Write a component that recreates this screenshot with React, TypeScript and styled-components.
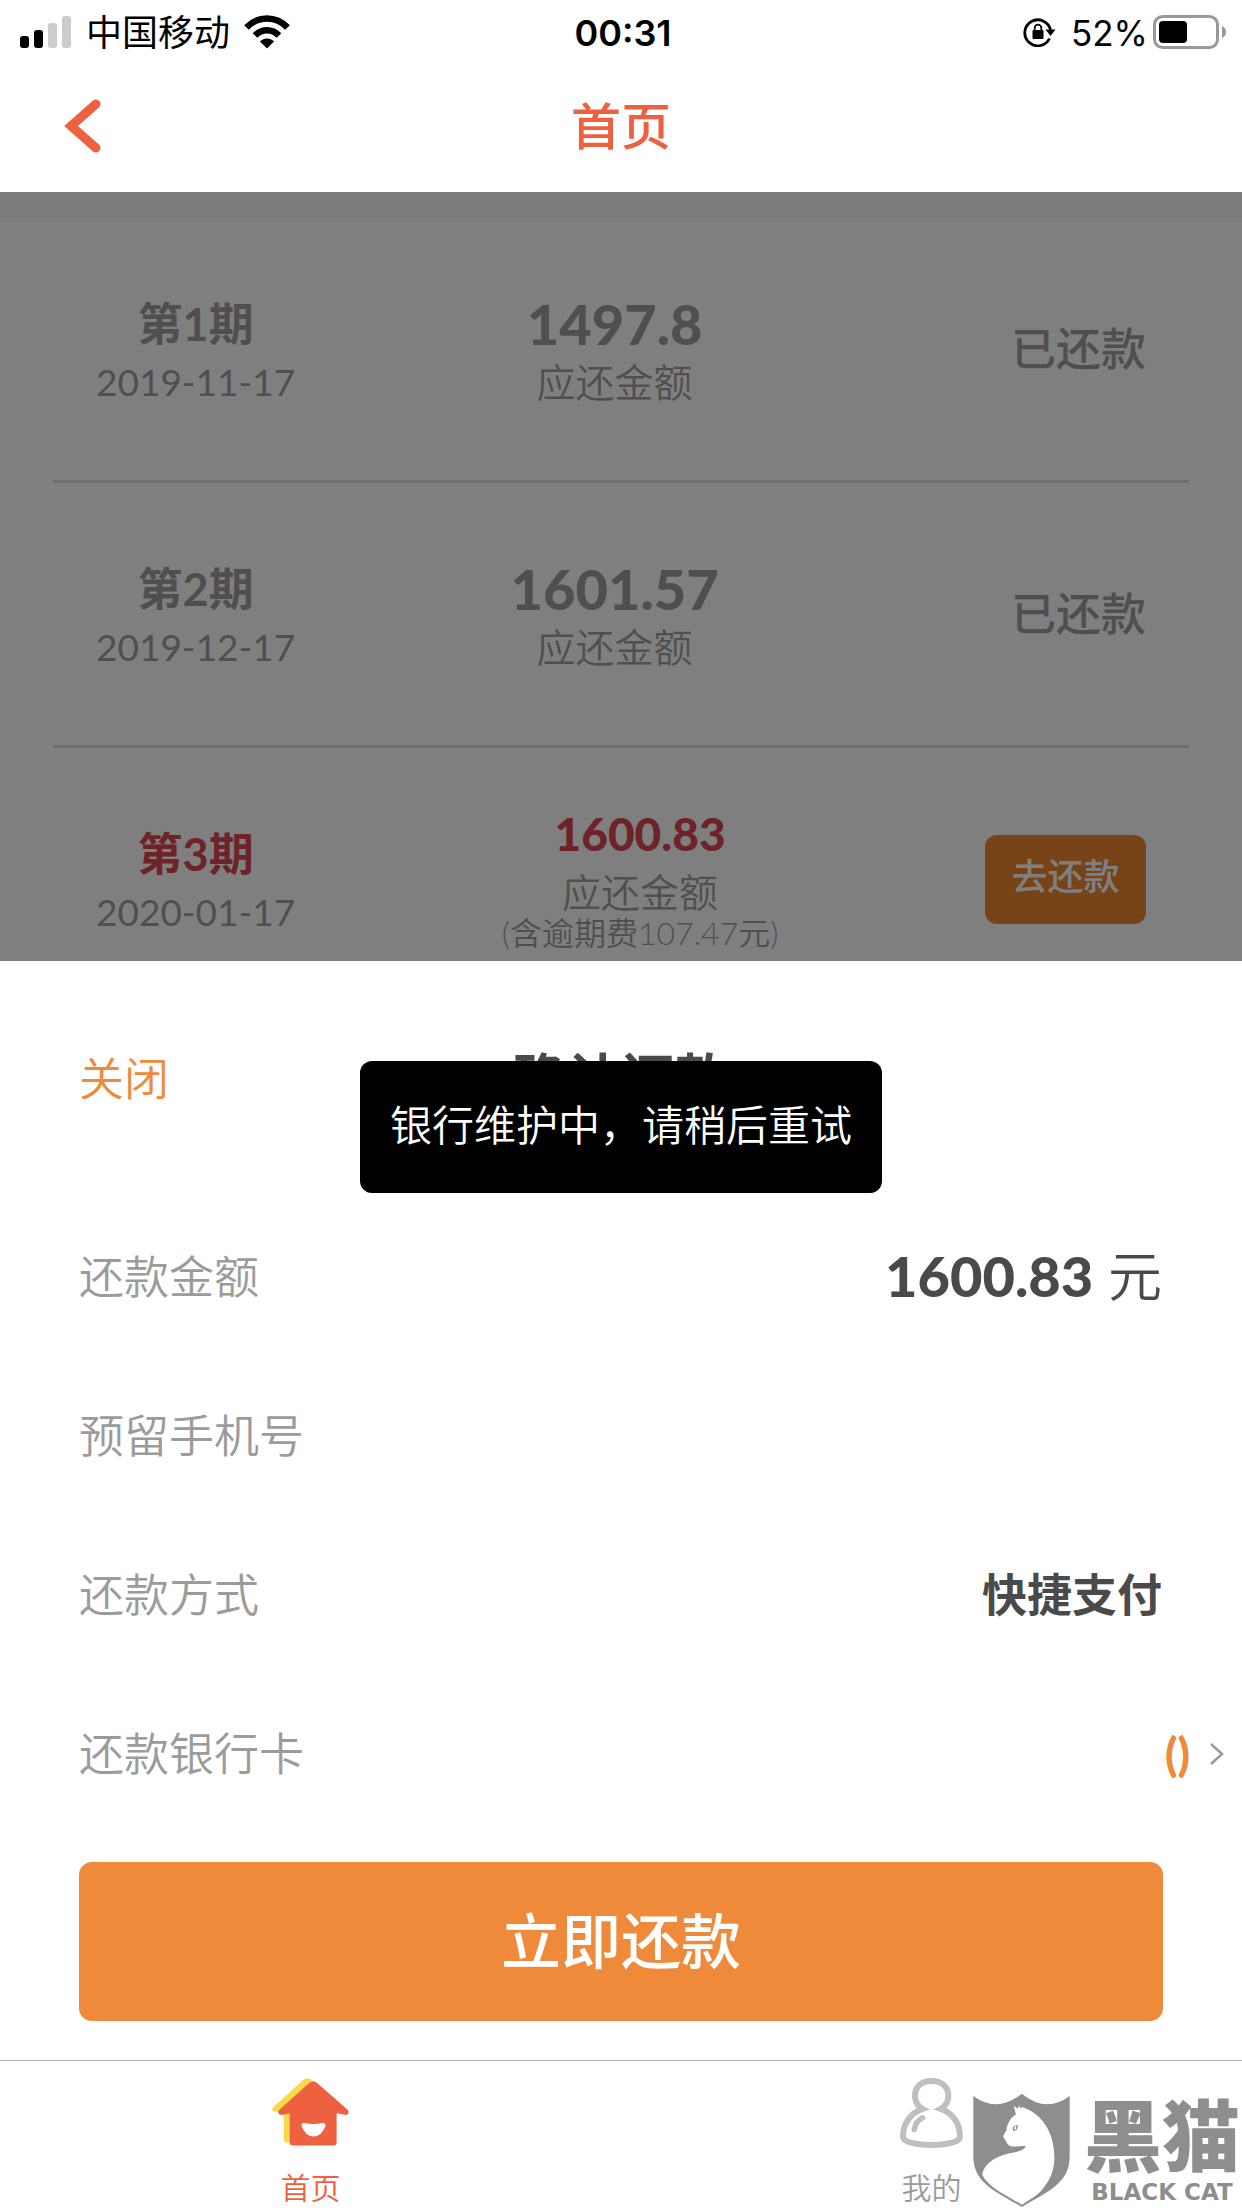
import React from "react";
import styled, { createGlobalStyle } from "styled-components";

const BRAND = "#ee6140";
const ORANGE = "#ee8a3a";
const DARK = "#4a4a4a";
const MUTED = "#9b9b9b";

const GlobalStyle = createGlobalStyle`
  * { box-sizing: border-box; }
  body {
    margin: 0;
    background: #fff;
    font-family: Lato, "Noto Sans CJK SC", sans-serif;
  }
  button, input {
    font: inherit;
    color: inherit;
    border: 0;
    padding: 0;
    background: none;
  }
  h1, h2, p, ul { margin: 0; padding: 0; }
  svg { display: block; flex: none; }
`;

const Page = styled.div`
  position: relative;
  display: flex;
  flex-direction: column;
  min-height: 100vh;
  background: #fff;
`;

const StatusBar = styled.header`
  display: grid;
  grid-template-columns: 1fr auto 1fr;
  align-items: center;
  height: 60px;
  padding: 0 16px 0 20px;
  font-family: Inter, "Noto Sans CJK SC", sans-serif;
  font-size: 36px;
  line-height: 60px;
  color: #000;
`;

const StatusGroup = styled.div<{ $end?: boolean }>`
  display: flex;
  align-items: center;
  justify-content: ${(p) => (p.$end ? "flex-end" : "flex-start")};
  gap: ${(p) => (p.$end ? "5px" : "14px")};
`;

const StatusText = styled.span`
  padding-top: 3px;
`;

const Clock = styled.time`
  padding-top: 3px;
  font-weight: 600;
  font-size: 36px;
`;

const Percent = styled.span`
  margin-left: 10px;
  padding-top: 3px;
  font-size: 35px;
`;

const NavBar = styled.nav`
  display: grid;
  grid-template-columns: 1fr auto 1fr;
  align-items: center;
  height: 132px;
  padding: 0 64px;
  color: ${BRAND};
`;

const NavTitle = styled.h1`
  font-size: 50px;
  font-weight: 500;
  line-height: 64px;
`;

const BackButton = styled.button`
  justify-self: start;
`;

const Stage = styled.main`
  position: relative;
  flex: 1;
  min-height: 1400px;
  overflow: hidden;
`;

const Strip = styled.div`
  height: 26px;
  background: #f6f6f6;
`;

const Schedule = styled.ul`
  list-style: none;
  padding: 0 53px;
`;

const Period = styled.li`
  display: flex;
  align-items: center;
  justify-content: space-between;
  height: 265px;
  padding: 0 43px;
  border-bottom: 3px solid #dcdcdc;
  color: #9f9f9f;
`;

const Stack = styled.div<{ $tall?: boolean }>`
  display: flex;
  flex-direction: column;
  align-items: center;
  padding: ${(p) => (p.$tall ? "0 0 8px" : "8px 0 0")};
`;

const PeriodName = styled.strong<{ $due?: boolean }>`
  font-size: 45px;
  font-weight: 700;
  line-height: 58px;
  color: ${(p) => (p.$due ? "#dc4652" : "inherit")};
`;

const Small = styled.span`
  font-size: 39px;
  font-weight: 350;
  line-height: 58px;
`;

const DateText = styled.time`
  font-size: 37px;
  font-weight: 400;
  line-height: 58px;
`;

const Sum = styled.strong<{ $due?: boolean }>`
  font-size: ${(p) => (p.$due ? "46px" : "56px")};
  font-weight: 900;
  line-height: 58px;
  color: ${(p) => (p.$due ? "#dc4652" : "inherit")};
`;

const Fee = styled.span`
  font-size: 32px;
  font-weight: 350;
  line-height: 24px;
`;

const Paid = styled.span`
  min-width: 212px;
  text-align: right;
  font-size: 45px;
  font-weight: 500;
  line-height: 58px;
`;

const RepayButton = styled.button`
  width: 161px;
  height: 89px;
  padding-bottom: 10px;
  border-radius: 12px;
  background: #ee862e;
  color: #fff;
  font-size: 36px;
  font-weight: 500;
`;

const Overlay = styled.div`
  position: absolute;
  inset: 0;
  background: rgba(0, 0, 0, 0.5);
`;

const Sheet = styled.section`
  position: absolute;
  left: 0;
  right: 0;
  bottom: 0;
  padding-bottom: 39px;
  background: #fff;
`;

const SheetHead = styled.div`
  display: grid;
  grid-template-columns: 1fr auto 1fr;
  align-items: center;
  height: 236px;
  padding: 0 79px;
`;

const CloseButton = styled.button`
  justify-self: start;
  font-size: 45px;
  font-weight: 350;
  line-height: 58px;
  color: ${ORANGE};
`;

const SheetTitle = styled.h2`
  font-size: 54px;
  font-weight: 700;
  line-height: 58px;
  color: ${DARK};
`;

const Field = styled.div<{ $link?: boolean }>`
  display: flex;
  align-items: center;
  justify-content: space-between;
  height: 159px;
  padding: 0 ${(p) => (p.$link ? "18px" : "80px")} 0 79px;
  font-size: 45px;
  line-height: 58px;
  color: ${DARK};
`;

const Label = styled.label`
  font-weight: 350;
  color: ${MUTED};
`;

const Amount = styled.output`
  font-size: 54px;
  font-weight: 350;
  strong {
    font-size: 56px;
    font-weight: 900;
  }
`;

const Method = styled.output`
  font-weight: 700;
`;

const PhoneInput = styled.input`
  flex: 1;
  min-width: 0;
  text-align: right;
  outline: none;
`;

const CardButton = styled.button`
  display: flex;
  align-items: center;
  gap: 20px;
  font-weight: 900;
  color: ${ORANGE};
`;

const PayButton = styled.button`
  display: block;
  width: calc(100% - 158px);
  height: 159px;
  margin: 29px 79px 0;
  padding-bottom: 8px;
  border-radius: 13px;
  background: ${ORANGE};
  color: #fff;
  font-size: 60px;
  font-weight: 500;
`;

const Toast = styled.div`
  position: absolute;
  top: 100px;
  left: 50%;
  transform: translateX(-50%);
  padding: 35px 30px 39px;
  border-radius: 12px;
  background: #000;
  color: #fff;
  font-size: 42px;
  font-weight: 350;
  line-height: 58px;
  white-space: nowrap;
`;

const TabBar = styled.nav`
  display: flex;
  height: 148px;
  border-top: 1px solid #adadad;
`;

const Tab = styled.a<{ $active?: boolean }>`
  flex: 1;
  display: flex;
  flex-direction: column;
  align-items: center;
  justify-content: space-between;
  padding-top: 17px;
  font-size: 30px;
  font-weight: 350;
  line-height: 42px;
  text-decoration: none;
  color: ${(p) => (p.$active ? BRAND : MUTED)};
`;

const Watermark = styled.div`
  position: absolute;
  right: 2px;
  bottom: 0;
  display: flex;
  align-items: flex-start;
  gap: 14px;
  color: #908d8e;
`;

const WatermarkText = styled.div`
  display: flex;
  flex-direction: column;
  align-items: center;
`;

const WatermarkName = styled.span`
  font-size: 78px;
  font-weight: 900;
  line-height: 86px;
`;

const WatermarkLatin = styled.span`
  font-family: "DejaVu Sans", sans-serif;
  font-size: 23px;
  font-weight: 700;
  line-height: 26px;
`;

const SignalIcon = () => (
  <svg width="52" height="32" viewBox="0 0 52 32" aria-hidden="true">
    <rect x="0" y="20" width="9" height="12" rx="3" />
    <rect x="14" y="14" width="9" height="18" rx="3" />
    <rect x="28" y="7" width="9" height="25" rx="3" fill="#ccc" />
    <rect x="42" y="0" width="9" height="32" rx="3" fill="#ccc" />
  </svg>
);

const WifiIcon = () => (
  <svg width="46" height="34" viewBox="0 0 46 34" fill="none" stroke="#000" aria-hidden="true">
    <path d="M2.500 12.500C14 .5 32 .5 43.500 12.500" strokeWidth="6.500" />
    <path d="M11 20.500C18 13.500 28 13.500 35 20.500" strokeWidth="6.500" />
    <path d="M16 26.500C19.500 22.500 26.500 22.500 30 26.500L23 33.500Z" fill="#000" stroke="none" />
  </svg>
);

const LockIcon = () => (
  <svg width="33" height="30" viewBox="0 0 33 30" aria-hidden="true">
    <path d="M26.500 21.500A13 13 0 1 1 27.500 13" fill="none" stroke="#000" strokeWidth="2.800" />
    <path d="M22.500 12.500H32.500L27.500 19Z" />
    <rect x="9.500" y="13" width="11" height="9" rx="1" />
    <path d="M11.700 14V11a3.300 3.300 0 0 1 6.600 0V14" fill="none" stroke="#000" strokeWidth="1.800" />
  </svg>
);

const BatteryIcon = () => (
  <svg width="73" height="34" viewBox="0 0 73 34" aria-hidden="true">
    <rect x="1.500" y="1.500" width="63" height="31" rx="8" fill="none" stroke="#999" strokeWidth="3" />
    <rect x="6" y="6" width="28" height="22" rx="4" />
    <path d="M69 11q4 2 4 6t-4 6z" fill="#999" />
  </svg>
);

const BackIcon = () => (
  <svg width="37" height="54" viewBox="0 0 37 54" fill="none" stroke={BRAND} aria-hidden="true">
    <path d="M32 5L7 27L32 49" strokeWidth="9" strokeLinecap="round" />
  </svg>
);

const ChevronIcon = () => (
  <svg width="14" height="24" viewBox="0 0 14 24" fill="none" stroke={MUTED} aria-hidden="true">
    <path d="M1 2L12 12L1 22" strokeWidth="2.500" />
  </svg>
);

const HomeIcon = () => (
  <svg width="77" height="68" viewBox="95 84 230 202" aria-hidden="true">
    <path
      d="M190 88Q202 80 217 92L160 150L118 184H105Q92 183 97 172ZM130 188H160V276H138Q130 276 130 268Z"
      fill="#f9d84a"
    />
    <path
      d="M117 178L207 98Q218 89 229 98L321 178Q328 188 318 194L288 189V276Q288 285 279 285H157Q148 285 148 276V189L124 194Q108 190 117 178Z"
      fill={BRAND}
    />
    <path d="M192 218Q219 224 246 218Q256 216 255 226Q243 258 219 258Q195 258 183 226Q182 216 192 218Z" fill="#fff" />
  </svg>
);

const UserIcon = () => (
  <svg width="63" height="70" viewBox="122 86 190 211" fill="none" stroke="#bfbfbf" aria-hidden="true">
    <path
      d="M190 179C154 160 158 95 217 95C277 95 281 160 245 179C283 192 303 226 303 262C303 280 260 288 217 288C175 288 131 280 131 262C131 226 152 192 190 179Z"
      strokeWidth="18"
    />
    <path d="M165 241C168 225 177 212 190 206" strokeWidth="17" strokeLinecap="round" />
  </svg>
);

const ShieldIcon = () => (
  <svg width="97" height="115" viewBox="339 129 292 344" aria-hidden="true">
    <path
      d="M340 137Q412 190 486 130Q560 190 630 137V320C630 400 562 426 486 471C410 426 340 400 340 320Z"
      fill="#908d8e"
    />
    <path
      d="M462 166L468 193C450 203 441 224 440 240C432 252 428 258 432 263C438 268 438 276 444 282C450 289 458 290 470 289L498 287C490 309 455 304 420 318C390 330 368 352 367 375C385 410 430 432 486 464C520 444 535 434 548 418C572 388 584 362 584 320C583 245 545 187 485 170L482 175L478 165L474 175Z"
      fill="#fff"
    />
    <path d="M458 233Q464 222 475 226Q474 242 461 242Z" fill="#908d8e" />
    <path d="M467 226L470 233L466 240L463 234Z" fill="#fff" />
  </svg>
);

type PeriodData = {
  name: string;
  date: string;
  sum: string;
  fee?: string;
};

const periods: PeriodData[] = [
  { name: "第1期", date: "2019-11-17", sum: "1497.8" },
  { name: "第2期", date: "2019-12-17", sum: "1601.57" },
  { name: "第3期", date: "2020-01-17", sum: "1600.83", fee: "(含逾期费107.47元)" },
];

const PeriodRow = ({ name, date, sum, fee }: PeriodData) => {
  const due = Boolean(fee);
  return (
    <Period>
      <Stack>
        <PeriodName $due={due}>{name}</PeriodName>
        <DateText>{date}</DateText>
      </Stack>
      <Stack $tall={due}>
        <Sum $due={due}>{sum}</Sum>
        <Small>应还金额</Small>
        {fee && <Fee>{fee}</Fee>}
      </Stack>
      {due ? <RepayButton type="button">去还款</RepayButton> : <Paid>已还款</Paid>}
    </Period>
  );
};

export default function App() {
  return (
    <>
      <GlobalStyle />
      <Page>
        <StatusBar>
          <StatusGroup>
            <SignalIcon />
            <StatusText>中国移动</StatusText>
            <WifiIcon />
          </StatusGroup>
          <Clock>00:31</Clock>
          <StatusGroup $end>
            <LockIcon />
            <Percent>52%</Percent>
            <BatteryIcon />
          </StatusGroup>
        </StatusBar>
        <NavBar>
          <BackButton type="button" aria-label="返回">
            <BackIcon />
          </BackButton>
          <NavTitle>首页</NavTitle>
        </NavBar>
        <Stage>
          <Strip />
          <Schedule>
            {periods.map((p) => (
              <PeriodRow key={p.name} {...p} />
            ))}
          </Schedule>
          <Overlay />
          <Sheet>
            <SheetHead>
              <CloseButton type="button">关闭</CloseButton>
              <SheetTitle>确认还款</SheetTitle>
            </SheetHead>
            <Field>
              <Label htmlFor="amount">还款金额</Label>
              <Amount id="amount">
                <strong>1600.83</strong> 元
              </Amount>
            </Field>
            <Field>
              <Label htmlFor="phone">预留手机号</Label>
              <PhoneInput id="phone" type="tel" />
            </Field>
            <Field>
              <Label htmlFor="method">还款方式</Label>
              <Method id="method">快捷支付</Method>
            </Field>
            <Field $link>
              <Label htmlFor="card">还款银行卡</Label>
              <CardButton id="card" type="button">
                () <ChevronIcon />
              </CardButton>
            </Field>
            <PayButton type="button">立即还款</PayButton>
            <Toast role="status">银行维护中，请稍后重试</Toast>
          </Sheet>
        </Stage>
        <TabBar>
          <Tab href="#home" $active>
            <HomeIcon />
            首页
          </Tab>
          <Tab href="#mine">
            <UserIcon />
            我的
          </Tab>
        </TabBar>
        <Watermark>
          <ShieldIcon />
          <WatermarkText>
            <WatermarkName>黑猫</WatermarkName>
            <WatermarkLatin>BLACK CAT</WatermarkLatin>
          </WatermarkText>
        </Watermark>
      </Page>
    </>
  );
}
